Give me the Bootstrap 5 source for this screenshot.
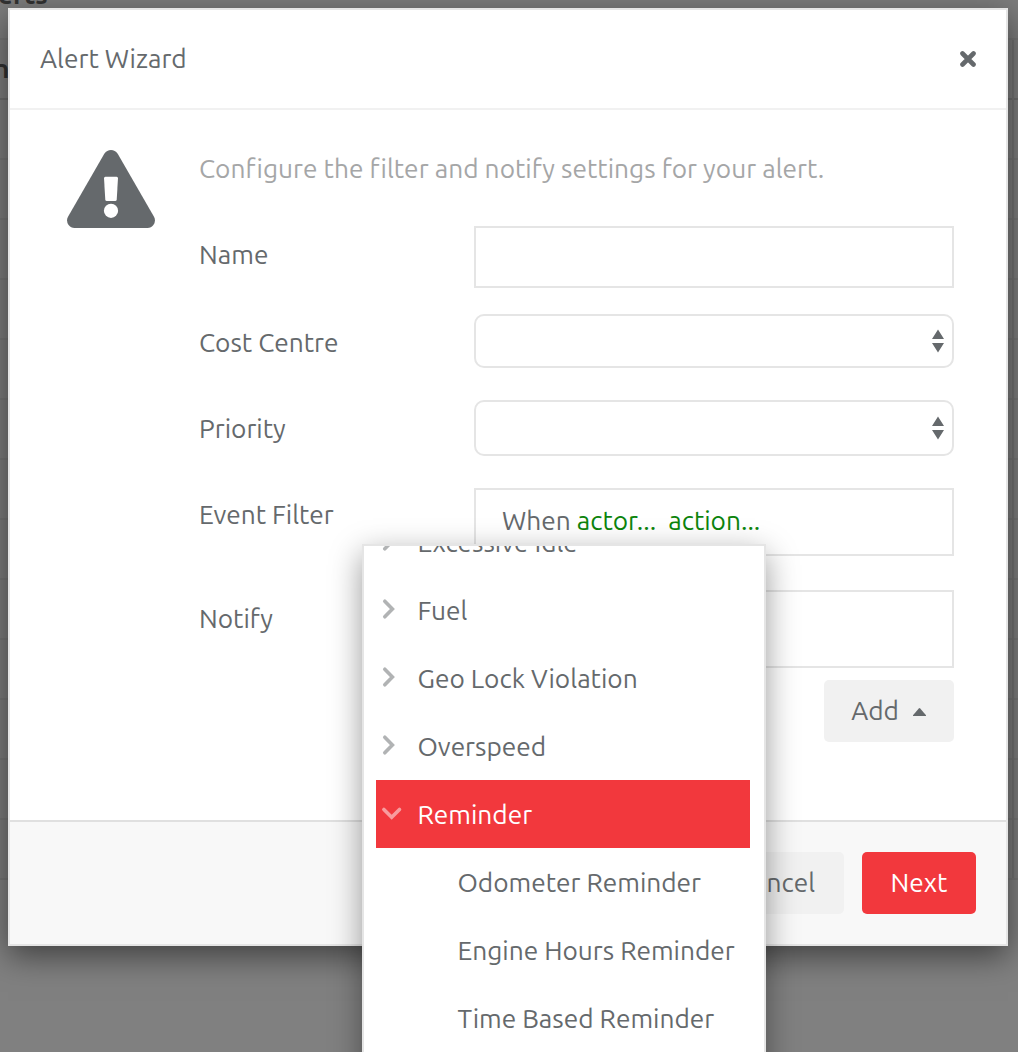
<!DOCTYPE html>
<html lang="en">
<head>
<meta charset="utf-8">
<meta name="viewport" content="width=device-width, initial-scale=1">
<title>Alert Wizard</title>
<link href="https://cdn.jsdelivr.net/npm/bootstrap@5.3.0/dist/css/bootstrap.min.css" rel="stylesheet">
<script src="https://cdn.jsdelivr.net/npm/bootstrap@5.3.0/dist/js/bootstrap.bundle.min.js"></script>
<style>
:root{--ink:#65696c;--line:#e5e5e5;--brand:#f2383d}
body{background:#808080;color:var(--ink);font:26.25px/36px Ubuntu,"Noto Sans",sans-serif}
.stage{height:1052px}
/* dimmed page under the dialog */
.page-under{height:880px;background:#7c7c7c;color:#323232;font-weight:700}
.under-title{height:62px;line-height:37px;margin-top:-24px;text-indent:-2px}
.under-head{height:62px;border-top:2px solid #757575;border-bottom:2px solid #6c6c6c;line-height:58px;text-indent:-6px}
.under-row{height:60px;border-bottom:2px solid #757575}
.under-edge{width:2px;background:#717171;right:4px;top:40px;height:838px}
/* dialog */
.wizard{margin:8px 10px 0 8px;height:938px;background:#fff;border:2px solid var(--line);border-radius:0;box-shadow:0 10px 30px rgba(0,0,0,.5);color:var(--ink)}
.wizard-head{height:100px;border-bottom:2px solid #f1f1f1;border-radius:0;padding:0 30px}
.wizard-title{font-size:26.25px;line-height:36px;font-weight:400}
.wizard-main{padding:40px 52px 0 57px}
.warn-col{width:132px}
.hint{color:#a5a6a7;margin:1px 0 39px;letter-spacing:.03px}
.field-label{width:275px;padding-top:11px}
.label-event{padding-top:9px}
.ctl{width:480px;border:2px solid var(--line);border-radius:0;background:#fff}
.ctl-name{height:62px;margin-bottom:26px}
.ctl-pick{border-radius:10px;padding-right:8px;color:var(--ink)}
.ctl-cost{height:54px;margin-bottom:32px}
.ctl-prio{height:56px;margin-bottom:32px}
.ctl-event{height:68px;margin-bottom:34px;padding:13px 26px}
.ctl-notify{height:78px;margin-bottom:12px}
.term{color:#0c840c}
.btn-wiz{--bs-btn-font-size:26.25px;--bs-btn-line-height:36px;--bs-btn-padding-y:0;--bs-btn-padding-x:0;--bs-btn-border-radius:5px;--bs-btn-border-width:0;height:62px}
.btn-soft{--bs-btn-bg:#f1f1f1;--bs-btn-color:var(--ink)}
.btn-go{--bs-btn-bg:var(--brand);--bs-btn-color:#fff;width:114px}
.btn-add{width:130px;padding-right:1px}
.btn-add svg{margin:2px 0 0 14px}
.btn-cancel{width:136px}
.wizard-foot{height:124px;background:#f8f8f8;border-top:2px solid #e0e0e0;border-radius:0;padding:30px 30px 0;gap:18px}
/* tree menu */
.tree-menu{left:362px;top:544px;width:404px;height:540px;background:#fff;border:2px solid var(--line);box-shadow:0 10px 30px rgba(0,0,0,.4);padding:0 14px 0 12px;z-index:5}
.tree-scroll{margin-top:-38px}
.tree-item{height:68px;padding:2px 0 0 5px}
.tree-item svg{width:22px;height:22px;margin:-4px 14.5px 0 0;opacity:.5;flex:none}
.tree-item.picked{background:var(--brand);color:#fff}
.tree-item.tree-leaf{padding-left:81.5px}
</style>
</head>
<body>
<div class="stage position-relative overflow-hidden">

  <div class="page-under position-absolute top-0 start-0 w-100 overflow-hidden" aria-hidden="true">
    <div class="under-title">erts</div>
    <div class="under-head">n</div>
    <div class="under-row"></div><div class="under-row"></div><div class="under-row"></div><div class="under-row"></div>
    <div class="under-row"></div><div class="under-row"></div><div class="under-row"></div><div class="under-row"></div>
    <div class="under-row"></div><div class="under-row"></div><div class="under-row"></div><div class="under-row"></div>
    <div class="under-row"></div>
    <div class="under-edge position-absolute"></div>
  </div>

  <div class="wizard modal-content w-auto" role="dialog" aria-labelledby="wizardTitle">
    <div class="wizard-head modal-header">
      <h1 class="wizard-title modal-title" id="wizardTitle">Alert Wizard</h1>
      <svg width="16" height="16" viewBox="0 0 16 16" role="button" aria-label="Close"><path d="M2.5 2.5 13.5 13.5M13.5 2.5 2.5 13.5" stroke="#65696c" stroke-width="4.6" stroke-linecap="round"/></svg>
    </div>

    <div class="wizard-main modal-body d-flex align-items-start">
      <div class="warn-col flex-shrink-0">
        <svg class="d-block" width="88" height="78" viewBox="0 0 88 78"><path fill="#65696c" d="M37.3 3.7Q40 0 44 0T50.7 3.7L87 66.8Q89.2 71 86.4 75 84.2 78 80.5 78H7.5Q3.8 78 1.6 75-1.2 71 1 66.8Z"/><path fill="#fff" d="M38.4 26.7H49.6Q51 26.7 51 28.2L49.7 49.7Q49.6 51.1 48.2 51.1H39.8Q38.4 51.1 38.3 49.7L37 28.2Q37 26.7 38.4 26.7Z"/><circle cx="44" cy="60.8" r="7.1" fill="#fff"/></svg>
      </div>
      <div class="flex-grow-1">
        <p class="hint">Configure the filter and notify settings for your alert.</p>
        <div class="d-flex"><label class="field-label">Name</label><div class="ctl ctl-name"></div></div>
        <div class="d-flex"><label class="field-label">Cost Centre</label>
          <div class="ctl ctl-pick ctl-cost d-flex align-items-center justify-content-end"><svg width="12" height="24" viewBox="0 0 12 24"><path fill="#65696c" d="M6 .5 12 10H0ZM0 14H12L6 23.5Z"/></svg></div></div>
        <div class="d-flex"><label class="field-label">Priority</label>
          <div class="ctl ctl-pick ctl-prio d-flex align-items-center justify-content-end"><svg width="12" height="24" viewBox="0 0 12 24"><path fill="#65696c" d="M6 .5 12 10H0ZM0 14H12L6 23.5Z"/></svg></div></div>
        <div class="d-flex"><label class="field-label label-event">Event Filter</label>
          <div class="ctl ctl-event">When <span class="term">actor...</span>&nbsp; <span class="term">action...</span></div></div>
        <div class="d-flex"><label class="field-label">Notify</label><div class="ctl ctl-notify"></div></div>
        <div class="d-flex justify-content-end"><button type="button" class="btn btn-wiz btn-soft btn-add d-flex align-items-center justify-content-center">Add<svg width="13" height="8" viewBox="0 0 13 8"><path fill="#65696c" d="M0 8V7.2L5.8.4Q6.5-.2 7.2.4L13 7.2V8Z"/></svg></button></div>
      </div>
    </div>

    <div class="wizard-foot d-flex justify-content-end">
      <button type="button" class="btn btn-wiz btn-soft btn-cancel">Cancel</button>
      <button type="button" class="btn btn-wiz btn-go">Next</button>
    </div>
  </div>

  <div class="tree-menu position-absolute overflow-hidden">
    <div class="tree-scroll">
      <div class="tree-item d-flex align-items-center"><svg viewBox="0 0 22 22" fill="none" stroke="currentColor" stroke-width="3.6" stroke-linecap="round"><path d="M3.8 3.2 11.4 11 3.8 18.8"/></svg>Excessive Idle</div>
      <div class="tree-item d-flex align-items-center"><svg viewBox="0 0 22 22" fill="none" stroke="currentColor" stroke-width="3.6" stroke-linecap="round"><path d="M3.8 3.2 11.4 11 3.8 18.8"/></svg>Fuel</div>
      <div class="tree-item d-flex align-items-center"><svg viewBox="0 0 22 22" fill="none" stroke="currentColor" stroke-width="3.6" stroke-linecap="round"><path d="M3.8 3.2 11.4 11 3.8 18.8"/></svg>Geo Lock Violation</div>
      <div class="tree-item d-flex align-items-center"><svg viewBox="0 0 22 22" fill="none" stroke="currentColor" stroke-width="3.6" stroke-linecap="round"><path d="M3.8 3.2 11.4 11 3.8 18.8"/></svg>Overspeed</div>
      <div class="tree-item picked d-flex align-items-center"><svg viewBox="0 0 22 22" fill="none" stroke="currentColor" stroke-width="3.6" stroke-linecap="round"><path d="M2.9 7.5 10.7 15.3 18.5 7.5"/></svg>Reminder</div>
      <div class="tree-item tree-leaf d-flex align-items-center">Odometer Reminder</div>
      <div class="tree-item tree-leaf d-flex align-items-center">Engine Hours Reminder</div>
      <div class="tree-item tree-leaf d-flex align-items-center">Time Based Reminder</div>
    </div>
  </div>
</div>
</body>
</html>
